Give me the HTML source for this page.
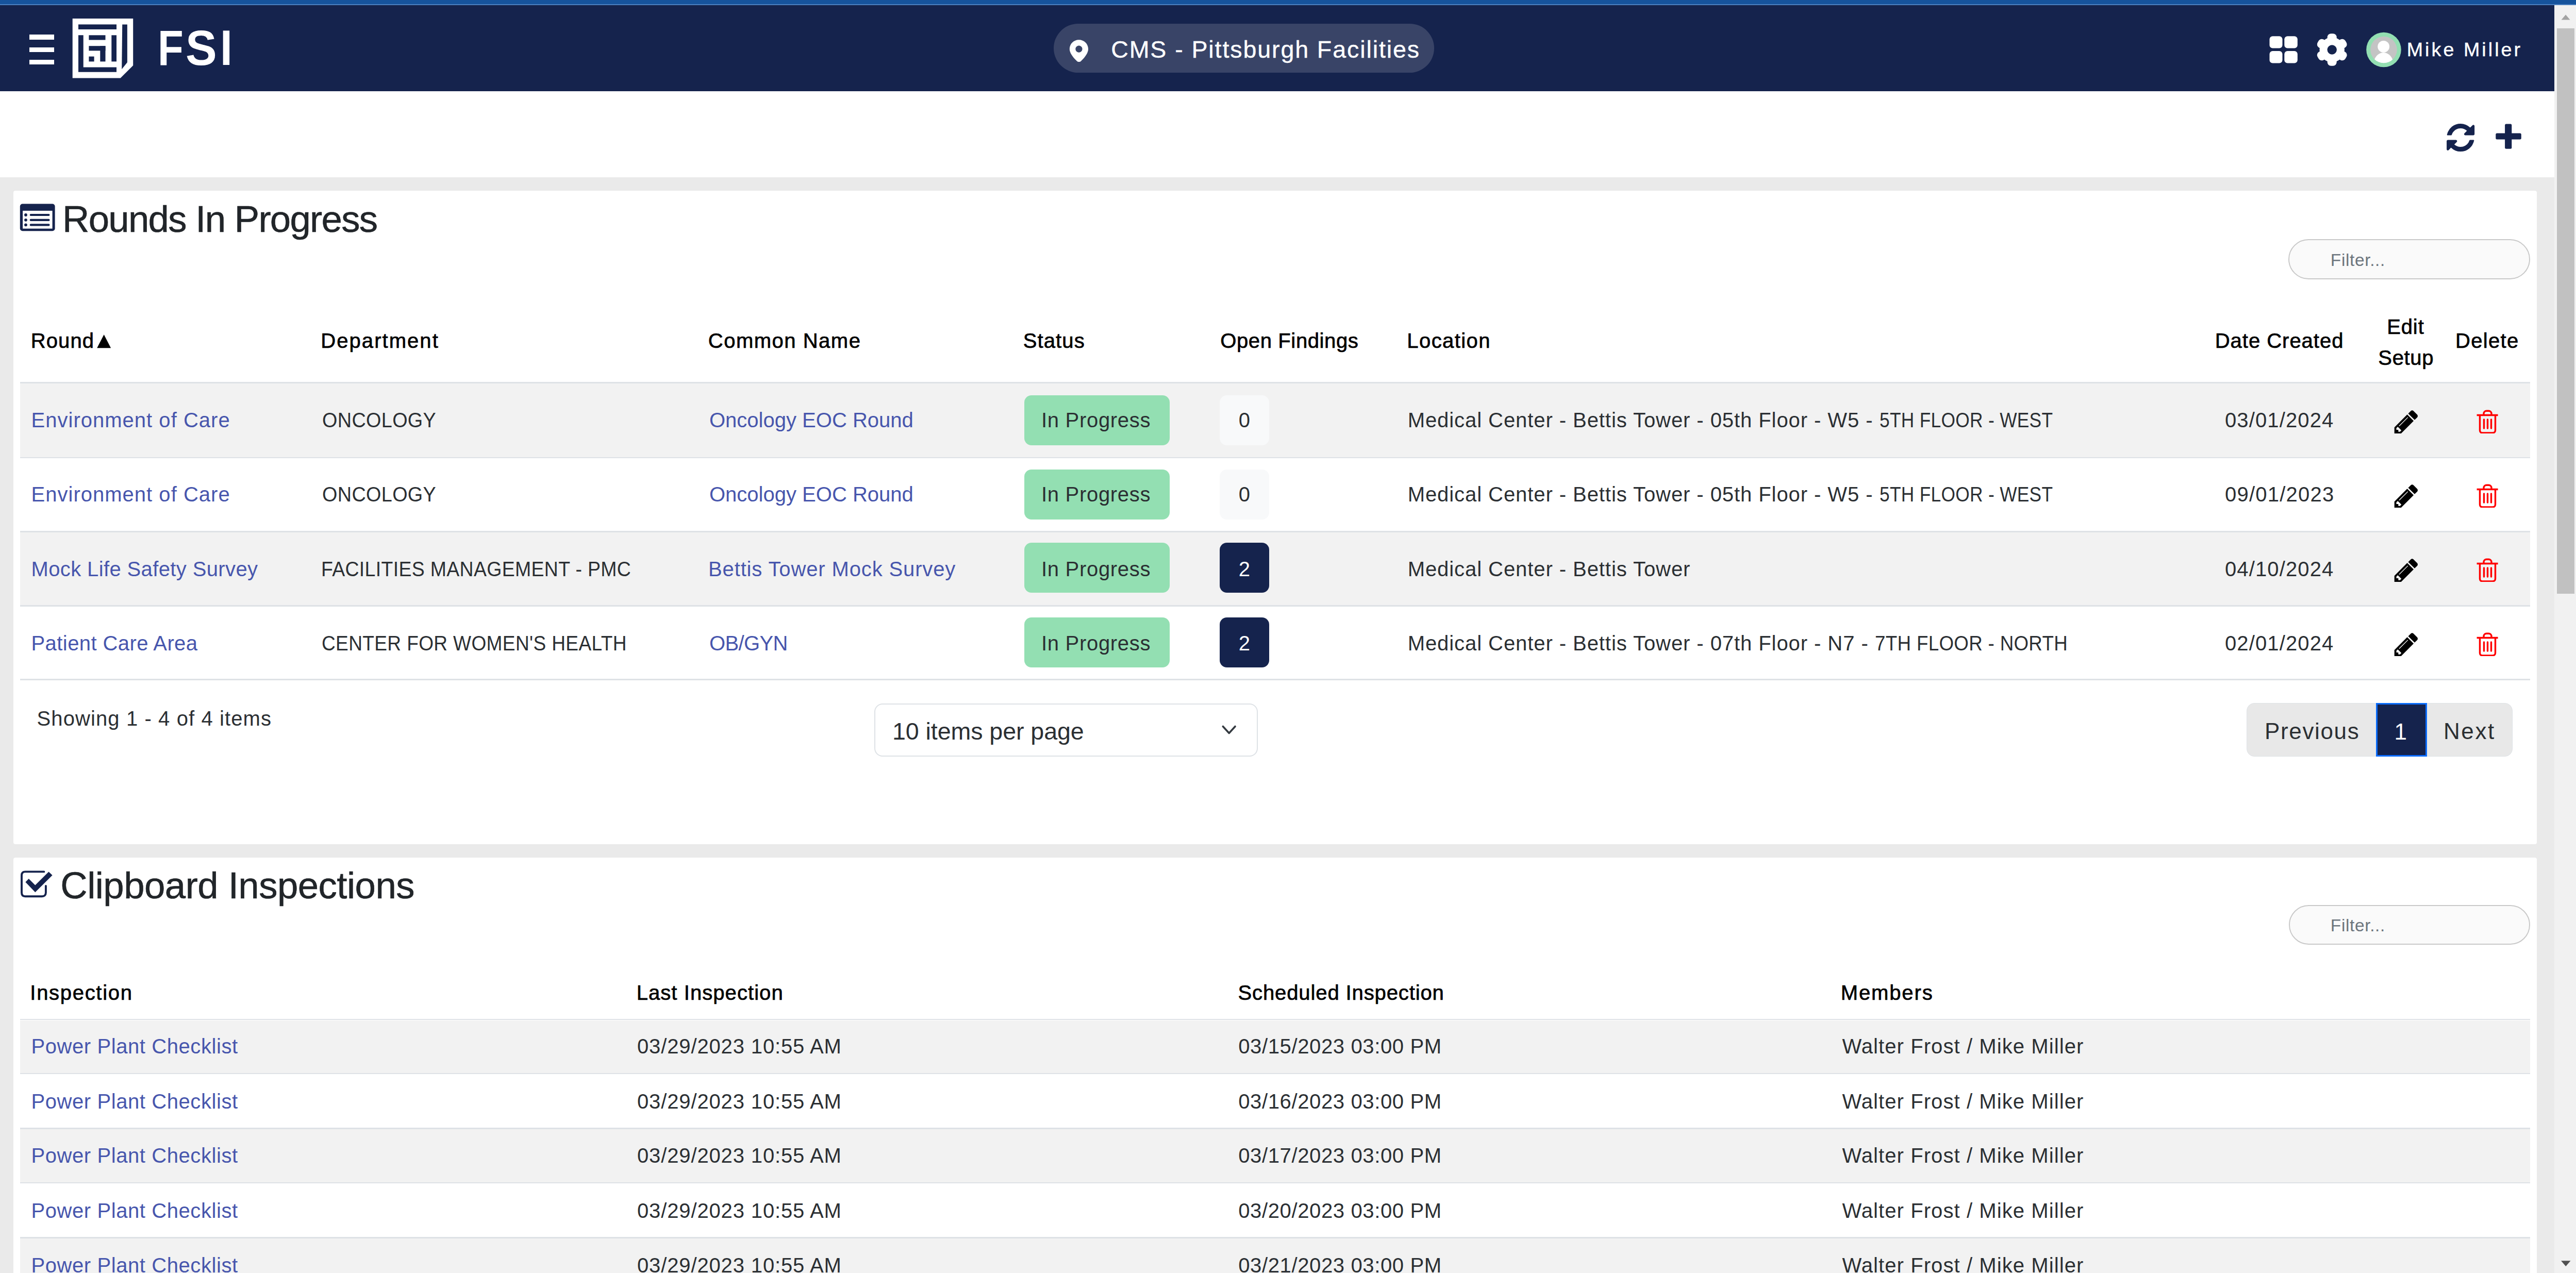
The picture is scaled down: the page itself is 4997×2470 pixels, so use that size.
<!DOCTYPE html>
<html><head><meta charset="utf-8">
<style>
html,body{margin:0;padding:0;width:4997px;height:2470px;overflow:hidden;background:#eaeaea;font-family:"Liberation Sans",sans-serif;color:#212529}
.a{position:absolute}
.t{position:absolute;white-space:nowrap;line-height:1;font-family:"Liberation Sans",sans-serif}
.b{font-weight:normal;-webkit-text-stroke:0.8px currentColor}
.fb{font-weight:bold}
.lk{color:#3f51b5}
.r{position:absolute;left:39px;width:4869px}
.g{background:#f2f2f2}
.bd{position:absolute;left:39px;width:4869px;height:2px;background:#dee2e6}
</style></head>
<body>
<div id="root" style="position:relative;width:4997px;height:2470px;overflow:hidden;background:#eaeaea">
<!-- top stripe -->
<div class="a" style="left:0;top:0;width:4997px;height:8px;background:#16539c"></div>
<div class="a" style="left:0;top:8px;width:4997px;height:2px;background:#4a7fc0"></div>
<!-- nav -->
<div class="a" style="left:0;top:10px;width:4955px;height:167px;background:#15234d"></div>

<!-- hamburger -->
<div class="a" style="left:57px;top:67.4px;width:47.5px;height:9.4px;background:#fff"></div>
<div class="a" style="left:57px;top:91.6px;width:47.5px;height:9.4px;background:#fff"></div>
<div class="a" style="left:57px;top:116px;width:47.5px;height:9.4px;background:#fff"></div>
<!-- logo -->
<svg class="a" style="left:0;top:0" width="270" height="170" viewBox="0 0 270 170">
<polygon fill="#fff" points="140.7,36.1 258.2,36.1 258.2,127 233.6,151.5 140.7,151.5"/>
<g fill="#15234d">
<rect x="152" y="47.4" width="74" height="9.6"/>
<polygon points="237.2,47.4 246.9,47.4 246.9,120.9 236.2,134.2"/>
<polygon points="152,68.3 161.7,68.3 161.7,130.6 226,130.6 226,139.8 152,139.8"/>
<rect x="216.3" y="68.3" width="9.7" height="51.1"/>
<rect x="172.4" y="68.3" width="32.1" height="9.2"/>
<rect x="172.4" y="89.2" width="32.1" height="9.2"/>
<rect x="194.3" y="89.2" width="10.2" height="30.2"/>
<rect x="172.4" y="109.6" width="10.2" height="9.8"/>
</g></svg>
<!-- FSI -->
<!-- pill -->
<div class="a" style="left:2044px;top:46px;width:738px;height:95px;border-radius:47.5px;background:#394467"></div>
<svg class="a" style="left:2060px;top:65px" width="70" height="65" viewBox="2060 65 70 65">
<path fill="#fff" fill-rule="evenodd" d="M2092.9,77.3 C2103,77.3 2111,85.3 2111,95.1 C2111,102 2106,110 2097,118.5 C2095,120.5 2091,120.5 2089,118.5 C2080,110 2074.8,102 2074.8,95.1 C2074.8,85.3 2082.8,77.3 2092.9,77.3 Z M2092.9,88.5 a6.6,6.6 0 1,0 0.01,0 Z"/>
</svg>
<!-- grid icon -->
<svg class="a" style="left:4390px;top:55px" width="80" height="80" viewBox="4390 55 80 80">
<g fill="#fff">
<rect x="4402.5" y="70.2" width="25" height="23.4" rx="6"/>
<rect x="4431.3" y="70.2" width="25.5" height="23.4" rx="6"/>
<rect x="4402.5" y="99" width="25" height="23.4" rx="6"/>
<rect x="4431.3" y="99" width="25.5" height="23.4" rx="6"/>
</g></svg>
<!-- gear -->
<svg class="a" style="left:4480px;top:55px" width="90" height="90" viewBox="4480 55 90 90">
<g fill="#fff" transform="translate(4523.7,96.5)">
<circle r="24.2"/>
<rect x="-9" y="-31.2" width="18" height="22" rx="7"/>
<rect x="-9" y="-31.2" width="18" height="22" rx="7" transform="rotate(60)"/>
<rect x="-9" y="-31.2" width="18" height="22" rx="7" transform="rotate(120)"/>
<rect x="-9" y="-31.2" width="18" height="22" rx="7" transform="rotate(180)"/>
<rect x="-9" y="-31.2" width="18" height="22" rx="7" transform="rotate(240)"/>
<rect x="-9" y="-31.2" width="18" height="22" rx="7" transform="rotate(300)"/>
<circle r="9.2" fill="#15234d"/>
</g></svg>
<!-- avatar -->
<svg class="a" style="left:4580px;top:55px" width="90" height="90" viewBox="4580 55 90 90">
<defs><clipPath id="avc"><circle cx="4624" cy="96.5" r="25.8"/></clipPath></defs>
<circle cx="4624" cy="96.5" r="33.8" fill="#93dfb2"/>
<circle cx="4624" cy="96.5" r="25.8" fill="#c4c4c4"/>
<g clip-path="url(#avc)" fill="#fff">
<circle cx="4623.7" cy="90.4" r="11.4"/>
<ellipse cx="4623.6" cy="124" rx="19" ry="22"/>
</g></svg>
<!-- toolbar white -->
<div class="a" style="left:0;top:177px;width:4955px;height:167px;background:#ffffff"></div>
<!-- cards -->
<div class="a" style="left:26px;top:370px;width:4895px;height:1268px;background:#fff;border-radius:4px"></div>
<div class="a" style="left:26px;top:1664px;width:4895px;height:820px;background:#fff;border-radius:4px"></div>
<svg width="0" height="0" style="position:absolute"><defs>
<g id="pencil"><path fill="#000" fill-rule="evenodd" transform="translate(4644.7,791.9) scale(0.0299)" d="M363 1536l91-91-235-235-91 91v107h128v128h107zm523-928q0-22-22-22-10 0-17 7l-542 542q-7 7-7 17 0 22 22 22 10 0 17-7l542-542q7-7 7-17zm-54-192l416 416-832 832h-416v-416zm683 96q0 53-37 90l-166 166-416-416 166-165q36-38 90-38 53 0 91 38l235 234q37 39 37 91z"/></g>
<g id="trash" fill="none" stroke="#ff0000" stroke-width="3.4">
<path d="M4804.6,805.5 H4845.6"/>
<path d="M4818,805 V802.5 C4818,799.5 4820.5,797.2 4823.5,797.2 H4827.5 C4830.5,797.2 4833,799.5 4833,802.5 V805"/>
<path d="M4810.5,806 V835 C4810.5,838 4812.5,840 4815.5,840 H4835 C4838,840 4840.5,838 4840.5,835 V806"/>
<path d="M4818.5,814 V831 M4825.5,814 V831 M4832.5,814 V831" stroke-linecap="round"/>
</g>
</defs></svg>
<svg class="a" style="left:4740px;top:234px" width="70" height="66" viewBox="4740 234 70 66">
<path fill="#15234d" transform="translate(4746.1,240) scale(0.0352)" d="M1511 928q0 5-1 7-64 268-268 434.5t-478 166.5q-146 0-282.5-55t-243.5-157l-129 129q-19 19-45 19t-45-19-19-45v-448q0-26 19-45t45-19h448q26 0 45 19t19 45-19 45l-137 137q71 66 161 102t187 36q134 0 250-65t186-179q11-17 53-117 8-23 30-23h192q13 0 22.5 9.5t9.5 22.5zm25-800v448q0 26-19 45t-45 19h-448q-26 0-45-19t-19-45 19-45l138-138q-148-137-349-137-134 0-250 65t-186 179q-11 17-53 117-8 23-30 23h-199q-13 0-22.5-9.5t-9.5-22.5v-7q65-268 270-434.5t480-166.5q146 0 284 55.5t245 156.5l130-129q19-19 45-19t45 19 19 45z"/>
</svg>
<svg class="a" style="left:4835px;top:234px" width="62" height="62" viewBox="4835 234 62 62">
<g fill="#15234d"><rect x="4859.1" y="240.6" width="13.2" height="48.1" rx="2.5"/><rect x="4841.3" y="258.4" width="49.5" height="12.2" rx="2.5"/></g>
</svg>
<svg class="a" style="left:30px;top:385px" width="85" height="75" viewBox="30 385 85 75">
<rect x="38.8" y="395.6" width="67.8" height="52.7" rx="5" fill="#15234d"/>
<rect x="44.1" y="408.9" width="57.5" height="34.7" fill="#fff"/>
<g fill="#15234d">
<circle cx="50" cy="417" r="2.9"/><circle cx="50" cy="426.8" r="2.9"/><circle cx="50" cy="436.3" r="2.9"/>
<rect x="57.7" y="414.9" width="38.8" height="4.2" rx="2"/><rect x="57.7" y="424.7" width="38.8" height="4.2" rx="2"/><rect x="57.7" y="434.2" width="38.8" height="4.2" rx="2"/>
</g></svg>
<div class="a" style="left:4439px;top:464.3px;width:468.6px;height:77.4px;box-sizing:border-box;border:2.5px solid #c9c9c9;border-radius:39px;background:#fafafa"></div>
<svg class="a" style="left:180px;top:640px" width="40" height="40" viewBox="180 640 40 40"><path d="M188.2,675.3 L215.1,675.3 L201.65,649.3 Z" fill="#000"/></svg>
<div class="bd" style="top:741px;height:2.6px"></div>
<div class="bd" style="top:886.6px;height:2.6px"></div>
<div class="bd" style="top:1030.2px;height:2.6px"></div>
<div class="bd" style="top:1174px;height:2.6px"></div>
<div class="bd" style="top:1317px;height:2.6px"></div>
<div class="r g" style="top:743.6px;height:143.0px"></div>
<div class="r g" style="top:1032.8px;height:141.2px"></div>
<div class="a" style="left:1987px;top:766.5px;width:282px;height:97px;border-radius:14px;background:#93dfb2"></div>
<div class="a" style="left:2365.5px;top:766.5px;width:96.5px;height:97px;border-radius:14px;background:#f8f9fa"></div>
<svg class="a" style="left:4640px;top:789.0px" width="56" height="52" viewBox="4640 789.0 56 52"><use href="#pencil" transform="translate(0,0.0)"/></svg>
<svg class="a" style="left:4800px;top:789.0px" width="52" height="52" viewBox="4800 789.0 52 52"><use href="#trash" transform="translate(0,0.0)"/></svg>
<div class="a" style="left:1987px;top:910.8px;width:282px;height:97px;border-radius:14px;background:#93dfb2"></div>
<div class="a" style="left:2365.5px;top:910.8px;width:96.5px;height:97px;border-radius:14px;background:#f8f9fa"></div>
<svg class="a" style="left:4640px;top:933.3px" width="56" height="52" viewBox="4640 933.3 56 52"><use href="#pencil" transform="translate(0,144.3)"/></svg>
<svg class="a" style="left:4800px;top:933.3px" width="52" height="52" viewBox="4800 933.3 52 52"><use href="#trash" transform="translate(0,144.3)"/></svg>
<div class="a" style="left:1987px;top:1053.3px;width:282px;height:97px;border-radius:14px;background:#93dfb2"></div>
<div class="a" style="left:2365.5px;top:1053.3px;width:96.5px;height:97px;border-radius:14px;background:#15234d"></div>
<svg class="a" style="left:4640px;top:1077.0px" width="56" height="52" viewBox="4640 1077.0 56 52"><use href="#pencil" transform="translate(0,288.0)"/></svg>
<svg class="a" style="left:4800px;top:1077.0px" width="52" height="52" viewBox="4800 1077.0 52 52"><use href="#trash" transform="translate(0,288.0)"/></svg>
<div class="a" style="left:1987px;top:1198.0px;width:282px;height:97px;border-radius:14px;background:#93dfb2"></div>
<div class="a" style="left:2365.5px;top:1198.0px;width:96.5px;height:97px;border-radius:14px;background:#15234d"></div>
<svg class="a" style="left:4640px;top:1220.5px" width="56" height="52" viewBox="4640 1220.5 56 52"><use href="#pencil" transform="translate(0,431.5)"/></svg>
<svg class="a" style="left:4800px;top:1220.5px" width="52" height="52" viewBox="4800 1220.5 52 52"><use href="#trash" transform="translate(0,431.5)"/></svg>
<div class="a" style="left:1696.3px;top:1365.2px;width:744.2px;height:102.5px;box-sizing:border-box;border:2.2px solid #dee2e6;border-radius:16px;background:#fff"></div>
<svg class="a" style="left:2360px;top:1398px" width="50" height="38" viewBox="2360 1398 50 38"><path d="M2372.3,1409.5 L2384.2,1422.5 L2396,1409.5" fill="none" stroke="#343a40" stroke-width="3.6" stroke-linecap="round" stroke-linejoin="round"/></svg>
<div class="a" style="left:4358.4px;top:1364.2px;width:515.6px;height:104.2px;box-sizing:border-box;border:1.8px solid #dee2e6;border-radius:15px;background:#e8e8e8"></div>
<div class="a" style="left:4608.6px;top:1364.2px;width:99px;height:104px;box-sizing:border-box;border:3px solid #0a6cff;background:#15234d"></div>
<svg class="a" style="left:30px;top:1675px" width="85" height="75" viewBox="30 1675 85 75">
<path d="M85.4,1691.4 H49 C44.5,1691.4 42,1694 42,1698.5 V1732 C42,1736.5 44.5,1739.2 49,1739.2 H81.5 C86,1739.2 88.9,1736.5 88.9,1732 V1719" fill="none" stroke="#15234d" stroke-width="3.9" stroke-linecap="round"/>
<path d="M49.4,1711.5 L55.8,1705 L68.3,1717.5 L94.5,1691.5 L101.6,1698.3 L68.3,1731.2 Z" fill="#15234d"/>
</svg>
<div class="a" style="left:4439.5px;top:1756px;width:468px;height:77px;box-sizing:border-box;border:2.5px solid #c9c9c9;border-radius:39px;background:#fafafa"></div>
<div class="bd" style="top:1976.9px;height:2.6px"></div>
<div class="bd" style="top:2081.8px;height:2.6px"></div>
<div class="bd" style="top:2188.2px;height:2.6px"></div>
<div class="bd" style="top:2293.6px;height:2.6px"></div>
<div class="bd" style="top:2400.2px;height:2.6px"></div>
<div class="r g" style="top:1979.5px;height:102.3px"></div>
<div class="r g" style="top:2190.8px;height:102.8px"></div>
<div class="r g" style="top:2402.8px;height:200px"></div>
<div class="t" style="left:306.21px;transform:scaleX(0.8480);transform-origin:0 0;top:45.34px;font-size:96px;color:#fff;font-weight:bold">F</div>
<div class="t" style="left:359.61px;transform:scaleX(0.9475);transform-origin:0 0;top:45.34px;font-size:96px;color:#fff;font-weight:bold">S</div>
<div class="t" style="left:427.24px;transform:scaleX(0.8933);transform-origin:0 0;top:45.34px;font-size:96px;color:#fff;font-weight:bold">I</div>
<div class="t" style="left:2155.20px;letter-spacing:1.925px;top:73.14px;font-size:46.5px;color:#fff;-webkit-text-stroke:0.4px currentColor">CMS - Pittsburgh Facilities</div>
<div class="t" style="left:4668.70px;letter-spacing:4.039px;top:78.09px;font-size:37.7px;color:#fff;-webkit-text-stroke:0.4px currentColor">Mike Miller</div>
<div class="t" style="left:121.10px;letter-spacing:-1.700px;top:388.63px;font-size:72.5px;color:#212529;-webkit-text-stroke:0.6px currentColor">Rounds In Progress</div>
<div class="t" style="left:4520.80px;letter-spacing:0.624px;top:487.64px;font-size:33.5px;color:#6c757d">Filter...</div>
<div class="t" style="left:59.65px;letter-spacing:1.144px;top:641.24px;font-size:40px;color:#000;-webkit-text-stroke:0.7px currentColor">Round</div>
<div class="t" style="left:622.35px;letter-spacing:2.048px;top:641.24px;font-size:40px;color:#000;-webkit-text-stroke:0.7px currentColor">Department</div>
<div class="t" style="left:1373.85px;letter-spacing:1.497px;top:641.24px;font-size:40px;color:#000;-webkit-text-stroke:0.7px currentColor">Common Name</div>
<div class="t" style="left:1984.85px;letter-spacing:1.080px;top:641.24px;font-size:40px;color:#000;-webkit-text-stroke:0.7px currentColor">Status</div>
<div class="t" style="left:2367.25px;letter-spacing:0.620px;top:641.24px;font-size:40px;color:#000;-webkit-text-stroke:0.7px currentColor">Open Findings</div>
<div class="t" style="left:2729.35px;letter-spacing:1.402px;top:641.24px;font-size:40px;color:#000;-webkit-text-stroke:0.7px currentColor">Location</div>
<div class="t" style="left:4296.75px;letter-spacing:0.976px;top:641.24px;font-size:40px;color:#000;-webkit-text-stroke:0.7px currentColor">Date Created</div>
<div class="t" style="left:4630.15px;letter-spacing:0.896px;top:614.14px;font-size:40px;color:#000;-webkit-text-stroke:0.7px currentColor">Edit</div>
<div class="t" style="left:4613.35px;letter-spacing:0.629px;top:673.64px;font-size:40px;color:#000;-webkit-text-stroke:0.7px currentColor">Setup</div>
<div class="t" style="left:4762.95px;letter-spacing:1.344px;top:641.24px;font-size:40px;color:#000;-webkit-text-stroke:0.7px currentColor">Delete</div>
<div class="t" style="left:60.50px;letter-spacing:1.017px;top:795.14px;font-size:40px;color:#4756ad">Environment of Care</div>
<div class="t" style="left:624.66px;letter-spacing:0.4px;transform:scaleX(0.9437);transform-origin:0 0;top:795.14px;font-size:40px;color:#2b2f33">ONCOLOGY</div>
<div class="t" style="left:1376.00px;letter-spacing:-0.001px;top:795.14px;font-size:40px;color:#4756ad">Oncology EOC Round</div>
<div class="t" style="left:2020.00px;letter-spacing:0.697px;top:795.14px;font-size:40px;color:#2b2f33">In Progress</div>
<div class="t" style="left:2263.75px;width:300px;text-align:center;top:795.14px;font-size:40px;color:#2b2f33">0</div>
<div class="t" style="left:4316.00px;letter-spacing:1.117px;top:795.14px;font-size:40px;color:#2b2f33">03/01/2024</div>
<div class="t" style="left:60.50px;letter-spacing:1.017px;top:938.64px;font-size:40px;color:#4756ad">Environment of Care</div>
<div class="t" style="left:624.66px;letter-spacing:0.4px;transform:scaleX(0.9437);transform-origin:0 0;top:938.64px;font-size:40px;color:#2b2f33">ONCOLOGY</div>
<div class="t" style="left:1376.00px;letter-spacing:-0.001px;top:938.64px;font-size:40px;color:#4756ad">Oncology EOC Round</div>
<div class="t" style="left:2020.00px;letter-spacing:0.697px;top:938.64px;font-size:40px;color:#2b2f33">In Progress</div>
<div class="t" style="left:2263.75px;width:300px;text-align:center;top:938.64px;font-size:40px;color:#2b2f33">0</div>
<div class="t" style="left:4316.00px;letter-spacing:1.228px;top:938.64px;font-size:40px;color:#2b2f33">09/01/2023</div>
<div class="t" style="left:60.50px;letter-spacing:0.373px;top:1084.14px;font-size:40px;color:#4756ad">Mock Life Safety Survey</div>
<div class="t" style="left:622.80px;letter-spacing:0.4px;transform:scaleX(0.9343);transform-origin:0 0;top:1084.14px;font-size:40px;color:#2b2f33">FACILITIES MANAGEMENT - PMC</div>
<div class="t" style="left:1374.00px;letter-spacing:0.864px;top:1084.14px;font-size:40px;color:#4756ad">Bettis Tower Mock Survey</div>
<div class="t" style="left:2020.00px;letter-spacing:0.697px;top:1084.14px;font-size:40px;color:#2b2f33">In Progress</div>
<div class="t" style="left:2263.75px;width:300px;text-align:center;top:1084.14px;font-size:40px;color:#fff">2</div>
<div class="t" style="left:4316.00px;letter-spacing:1.117px;top:1084.14px;font-size:40px;color:#2b2f33">04/10/2024</div>
<div class="t" style="left:60.50px;letter-spacing:0.425px;top:1227.94px;font-size:40px;color:#4756ad">Patient Care Area</div>
<div class="t" style="left:623.75px;letter-spacing:0.4px;transform:scaleX(0.9259);transform-origin:0 0;top:1227.94px;font-size:40px;color:#2b2f33">CENTER FOR WOMEN'S HEALTH</div>
<div class="t" style="left:1376.00px;letter-spacing:-0.640px;top:1227.94px;font-size:40px;color:#4756ad">OB/GYN</div>
<div class="t" style="left:2020.00px;letter-spacing:0.697px;top:1227.94px;font-size:40px;color:#2b2f33">In Progress</div>
<div class="t" style="left:2263.75px;width:300px;text-align:center;top:1227.94px;font-size:40px;color:#fff">2</div>
<div class="t" style="left:4316.00px;letter-spacing:1.117px;top:1227.94px;font-size:40px;color:#2b2f33">02/01/2024</div>
<div class="t" style="left:71.50px;letter-spacing:1.104px;top:1373.64px;font-size:40px;color:#2b2f33">Showing 1 - 4 of 4 items</div>
<div class="t" style="left:1731.00px;letter-spacing:-0.079px;top:1395.55px;font-size:46.6px;color:#2b2f33">10 items per page</div>
<div class="t" style="left:4393.00px;letter-spacing:1.645px;top:1397.25px;font-size:44px;color:#2b2f33">Previous</div>
<div class="t" style="left:4740.00px;letter-spacing:2.585px;top:1397.25px;font-size:44px;color:#2b2f33">Next</div>
<div class="t" style="left:4506.70px;width:300px;text-align:center;top:1397.55px;font-size:44px;color:#fff">1</div>
<div class="t" style="left:117.30px;letter-spacing:-0.503px;top:1681.53px;font-size:72.5px;color:#212529;-webkit-text-stroke:0.6px currentColor">Clipboard Inspections</div>
<div class="t" style="left:4520.80px;letter-spacing:0.624px;top:1779.34px;font-size:33.5px;color:#6c757d">Filter...</div>
<div class="t" style="left:58.35px;letter-spacing:1.689px;top:1906.44px;font-size:40px;color:#000;-webkit-text-stroke:0.7px currentColor">Inspection</div>
<div class="t" style="left:1234.65px;letter-spacing:1.070px;top:1906.44px;font-size:40px;color:#000;-webkit-text-stroke:0.7px currentColor">Last Inspection</div>
<div class="t" style="left:2401.55px;letter-spacing:0.881px;top:1906.44px;font-size:40px;color:#000;-webkit-text-stroke:0.7px currentColor">Scheduled Inspection</div>
<div class="t" style="left:3570.75px;letter-spacing:1.867px;top:1906.44px;font-size:40px;color:#000;-webkit-text-stroke:0.7px currentColor">Members</div>
<div class="t" style="left:60.50px;letter-spacing:0.579px;top:2010.44px;font-size:40px;color:#4756ad">Power Plant Checklist</div>
<div class="t" style="left:1236.00px;letter-spacing:0.861px;top:2010.44px;font-size:40px;color:#2b2f33">03/29/2023 10:55 AM</div>
<div class="t" style="left:2402.20px;letter-spacing:0.633px;top:2010.44px;font-size:40px;color:#2b2f33">03/15/2023 03:00 PM</div>
<div class="t" style="left:3573.40px;letter-spacing:1.086px;top:2010.44px;font-size:40px;color:#2b2f33">Walter Frost / Mike Miller</div>
<div class="t" style="left:60.50px;letter-spacing:0.579px;top:2116.64px;font-size:40px;color:#4756ad">Power Plant Checklist</div>
<div class="t" style="left:1236.00px;letter-spacing:0.861px;top:2116.64px;font-size:40px;color:#2b2f33">03/29/2023 10:55 AM</div>
<div class="t" style="left:2402.20px;letter-spacing:0.633px;top:2116.64px;font-size:40px;color:#2b2f33">03/16/2023 03:00 PM</div>
<div class="t" style="left:3573.40px;letter-spacing:1.086px;top:2116.64px;font-size:40px;color:#2b2f33">Walter Frost / Mike Miller</div>
<div class="t" style="left:60.50px;letter-spacing:0.579px;top:2222.44px;font-size:40px;color:#4756ad">Power Plant Checklist</div>
<div class="t" style="left:1236.00px;letter-spacing:0.861px;top:2222.44px;font-size:40px;color:#2b2f33">03/29/2023 10:55 AM</div>
<div class="t" style="left:2402.20px;letter-spacing:0.633px;top:2222.44px;font-size:40px;color:#2b2f33">03/17/2023 03:00 PM</div>
<div class="t" style="left:3573.40px;letter-spacing:1.086px;top:2222.44px;font-size:40px;color:#2b2f33">Walter Frost / Mike Miller</div>
<div class="t" style="left:60.50px;letter-spacing:0.579px;top:2328.64px;font-size:40px;color:#4756ad">Power Plant Checklist</div>
<div class="t" style="left:1236.00px;letter-spacing:0.861px;top:2328.64px;font-size:40px;color:#2b2f33">03/29/2023 10:55 AM</div>
<div class="t" style="left:2402.20px;letter-spacing:0.633px;top:2328.64px;font-size:40px;color:#2b2f33">03/20/2023 03:00 PM</div>
<div class="t" style="left:3573.40px;letter-spacing:1.086px;top:2328.64px;font-size:40px;color:#2b2f33">Walter Frost / Mike Miller</div>
<div class="t" style="left:60.50px;letter-spacing:0.579px;top:2434.64px;font-size:40px;color:#4756ad">Power Plant Checklist</div>
<div class="t" style="left:1236.00px;letter-spacing:0.861px;top:2434.64px;font-size:40px;color:#2b2f33">03/29/2023 10:55 AM</div>
<div class="t" style="left:2402.20px;letter-spacing:0.633px;top:2434.64px;font-size:40px;color:#2b2f33">03/21/2023 03:00 PM</div>
<div class="t" style="left:3573.40px;letter-spacing:1.086px;top:2434.64px;font-size:40px;color:#2b2f33">Walter Frost / Mike Miller</div>
<div class="t" style="left:2730.70px;top:795.14px;font-size:40px;color:#2b2f33;letter-spacing:0.929px">Medical Center - Bettis Tower - 05th Floor - W5 - </div>
<div class="t" style="left:3646.30px;top:795.14px;font-size:40px;color:#2b2f33;letter-spacing:0.4px;transform:scaleX(0.8805);transform-origin:0 0">5TH FLOOR - WEST</div>
<div class="t" style="left:2730.70px;top:938.64px;font-size:40px;color:#2b2f33;letter-spacing:0.929px">Medical Center - Bettis Tower - 05th Floor - W5 - </div>
<div class="t" style="left:3646.30px;top:938.64px;font-size:40px;color:#2b2f33;letter-spacing:0.4px;transform:scaleX(0.8805);transform-origin:0 0">5TH FLOOR - WEST</div>
<div class="t" style="left:2730.70px;letter-spacing:0.929px;top:1084.14px;font-size:40px;color:#2b2f33">Medical Center - Bettis Tower</div>
<div class="t" style="left:2730.70px;top:1227.94px;font-size:40px;color:#2b2f33;letter-spacing:0.929px">Medical Center - Bettis Tower - 07th Floor - N7 - </div>
<div class="t" style="left:3637.43px;top:1227.94px;font-size:40px;color:#2b2f33;letter-spacing:0.4px;transform:scaleX(0.9163);transform-origin:0 0">7TH FLOOR - NORTH</div>
<!-- scrollbar -->
<div class="a" style="left:4955px;top:10px;width:42px;height:2460px;background:#f1f1f1"></div>
<div class="a" style="left:4960px;top:55px;width:34px;height:1097px;background:#c1c1c1"></div>
<svg class="a" style="left:4955px;top:10px" width="42" height="2460" viewBox="4955 10 42 2460">
<path d="M4977,28.5 L4985.5,38.5 L4968.5,38.5 Z" fill="#a3a3a3"/>
<path d="M4968,2446.2 L4986.5,2446.2 L4977.2,2457 Z" fill="#505050"/>
</svg>
</div>
</body></html>
